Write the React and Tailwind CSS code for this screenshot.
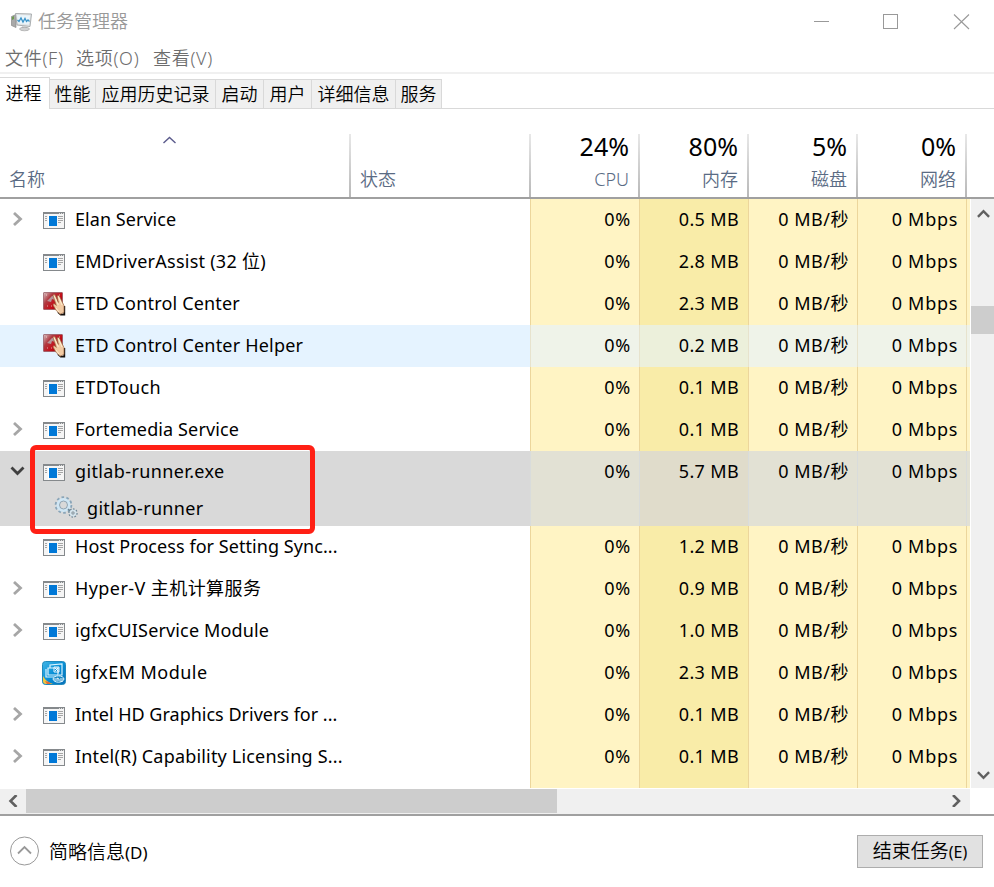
import React, { useState } from "react";

const uiFont = "font-['Noto_Sans','Noto_Sans_CJK_SC',sans-serif]";

const menus = [
  { name: "文件(F)", width: "w-[57px]" },
  { name: "选项(O)", width: "w-[63px]" },
  { name: "查看(V)", width: "w-[60px]" },
];

const tabs = [
  { name: "性能", width: "w-[46px]" },
  { name: "应用历史记录", width: "w-[120px]" },
  { name: "启动", width: "w-[48px]" },
  { name: "用户", width: "w-[48px]" },
  { name: "详细信息", width: "w-[84px]" },
  { name: "服务", width: "w-[46px]" },
];

const columns = [
  { usage: "24%", name: "CPU" },
  { usage: "80%", name: "内存" },
  { usage: "5%", name: "磁盘" },
  { usage: "0%", name: "网络" },
];

const processes = [
  { name: "Elan Service", icon: "app", arrow: true, memory: "0.5 MB", tracking: "tracking-[0.05px]" },
  { name: "EMDriverAssist (32 位)", icon: "app", memory: "2.8 MB", tracking: "tracking-[0.25px]" },
  { name: "ETD Control Center", icon: "etd", memory: "2.3 MB", tracking: "tracking-[0.18px]" },
  { name: "ETD Control Center Helper", icon: "etd", memory: "0.2 MB", hover: true, tracking: "tracking-[0.2px]" },
  { name: "ETDTouch", icon: "app", memory: "0.1 MB", tracking: "tracking-[0.35px]" },
  { name: "Fortemedia Service", icon: "app", arrow: true, memory: "0.1 MB", tracking: "tracking-[0.12px]" },
  { name: "gitlab-runner.exe", icon: "app", child: "gitlab-runner", memory: "5.7 MB", tracking: "tracking-[0.37px]" },
  { name: "Host Process for Setting Sync...", icon: "app", memory: "1.2 MB", tracking: "tracking-[0.06px]" },
  { name: "Hyper-V 主机计算服务", icon: "app", arrow: true, memory: "0.9 MB", tracking: "tracking-[0.42px]" },
  { name: "igfxCUIService Module", icon: "app", arrow: true, memory: "1.0 MB", tracking: "tracking-[0.15px]" },
  { name: "igfxEM Module", icon: "intel", memory: "2.3 MB", tracking: "tracking-[0.45px]" },
  { name: "Intel HD Graphics Drivers for ...", icon: "app", arrow: true, memory: "0.1 MB", tracking: "tracking-normal" },
  { name: "Intel(R) Capability Licensing S...", icon: "app", arrow: true, memory: "0.1 MB", tracking: "tracking-[0.18px]" },
];

const Chevron = ({ className, points = "1,8 7,2 13,8", stroke = "#606060", width = 2.6, box = "0 0 14 10" }) => (
  <svg className={className} viewBox={box} fill="none">
    <polyline points={points} stroke={stroke} strokeWidth={width} />
  </svg>
);

const MonitorIcon = () => (
  <svg className="w-[22px] h-5" viewBox="0 0 22 20">
    <path d="M.5 4.5L5 2.5v13l-4.5-2z" fill="#a9a9a9" stroke="#8a8a8a" strokeWidth=".7" />
    <path d="M1 5l2-1v3L1 8z" fill="#6f9c50" />
    <path d="M4.5 1.5l16 .5-1.5 12.5L6 13z" fill="#e2e5e6" stroke="#a2a6a8" strokeWidth=".9" />
    <path d="M6 3l13 .5-1.2 9L7 11.5z" fill="#eaf5fb" />
    <path d="M6.5 8l1.5 1.5L10 6l2 4 2-3.5 1.5 3L17 8l1.5 1.5" fill="none" stroke="#3a93c8" strokeWidth="1.3" />
    <path d="M11 14.5l5 .5v2h-5z" fill="#b5b5b5" />
    <ellipse cx="13.5" cy="17" rx="5" ry="1.8" fill="#cfd0d1" stroke="#a0a0a0" strokeWidth=".6" />
  </svg>
);

const AppIcon = () => (
  <svg className="w-[22px] h-[17px]" viewBox="0 0 22 17" shapeRendering="crispEdges">
    <rect width="22" height="17" fill="#85898c" />
    <rect x="1" y="2" width="20" height="14" fill="#f5f5f5" />
    <rect x="5" y="2" width="1" height="14" fill="#fff" />
    <rect x="6" y="4" width="8" height="10" fill="#0078d7" />
    <path d="M2 4.5h2M2 6.5h2M2 8.5h2M15 4.5h5M15 6.5h5M15 8.5h5M15 10.5h3" stroke="#a5a5a5" />
    <path d="M16 1.5h1M18 1.5h1M20 1.5h1" stroke="#ddd" />
  </svg>
);

const EtdIcon = () => (
  <svg className="w-[23px] h-6" viewBox="0 0 23 24">
    <defs>
      <linearGradient id="etdRed" x1="0" y1="0" x2="1" y2=".7">
        <stop offset="0" stopColor="#d8c4c4" />
        <stop offset=".35" stopColor="#b03a42" />
        <stop offset=".7" stopColor="#c50d17" />
        <stop offset="1" stopColor="#8c0710" />
      </linearGradient>
    </defs>
    <rect x=".5" y=".5" width="19" height="17" rx=".5" fill="url(#etdRed)" stroke="#91505a" strokeWidth=".7" />
    <path d="M4 9l5-5h2l1 4-3-1-1 3z" fill="#b7a7aa" opacity=".85" />
    <path d="M21.3 14v8.7h-3.5L15 20" fill="none" stroke="#15100d" strokeWidth="1.8" />
    <path d="M10 3.5c.5-1.5 2-1 2.3 0l3 7-1-6c0-1.5 1.8-1.5 2.2 0l4.5 9v7l-4 1.7-4-4-2.7-4.8c-.5-1.6.7-2.2 2-1l1 1z" fill="#f2cba4" stroke="#9a6644" strokeWidth=".7" />
    <path d="M11.3 4l4 9M15.4 4.5l3.6 8.5M13 16l3 4" stroke="#fff0d5" strokeWidth=".9" />
    <path d="M3 3h1M16 3h1M4 14h1M8 14h1" stroke="#fff" opacity=".6" />
  </svg>
);

const IntelIcon = () => (
  <svg className="-ml-px w-6 h-6" viewBox="0 0 24 24">
    <defs>
      <linearGradient id="intelBlue" x1="0" y1="0" x2="1" y2="1">
        <stop stopColor="#42b5e5" />
        <stop offset=".5" stopColor="#078fd6" />
        <stop offset="1" stopColor="#086eb8" />
      </linearGradient>
    </defs>
    <rect x=".5" y=".5" width="23" height="23" rx="3" fill="url(#intelBlue)" stroke="#218abc" />
    <path d="M1 15q3 6 10 8H4q-3 0-3-3z" fill="#f4c83d" />
    <path d="M3 20l4 1 2 2H5z" fill="#e66735" />
    <path d="M8 7V4l12-1v11h-3M6 7h10v7H6zM4 8v8h9" fill="none" stroke="#d9f4ff" strokeWidth="1.2" />
    <path d="M12 6h5v5h-5zM13 7l3 3M16 7l-3 3" fill="none" stroke="#fff" strokeWidth=".9" />
    <ellipse cx="16.5" cy="18" rx="5.4" ry="3.2" fill="#1687c3" stroke="#e2f7ff" strokeWidth="1" />
    <path d="M13 17v3M15 20v-3l2 1v2M18 18h3M18 20h3" fill="none" stroke="#fff" strokeWidth=".9" />
  </svg>
);

const GearIcon = () => (
  <svg className="w-6 h-[23px]" viewBox="0 0 24 23" fill="none">
    <circle cx="9.5" cy="9" r="7.6" stroke="#8aa5b8" strokeWidth="2.4" strokeDasharray="2.6 2.2" />
    <circle cx="9.5" cy="9" r="5.6" fill="#dfe6ea" stroke="#cfe6f4" strokeWidth="3" />
    <circle cx="9.5" cy="9" r="4" fill="#d9d9d9" stroke="#7d97a9" strokeWidth=".8" />
    <path d="M14 13l3 3" stroke="#6d8594" strokeWidth="1.4" />
    <circle cx="19" cy="17" r="3.8" stroke="#6d8594" strokeWidth="1.8" strokeDasharray="1.6 1.3" />
    <circle cx="19" cy="17" r="2.6" stroke="#d3e3ec" strokeWidth="1.8" />
    <circle cx="19" cy="17" r="1.2" stroke="#6d8594" strokeWidth=".8" />
  </svg>
);

const icons = { app: AppIcon, etd: EtdIcon, intel: IntelIcon };

const Label = ({ children, className = "" }) => (
  <span className={`whitespace-nowrap ${className}`}>{children}</span>
);

const ProcessRow = ({ process, expanded, onToggle }) => {
  const Icon = icons[process.icon];
  const values = [
    { text: "0%", tracking: "tracking-[0.8px] -mr-px" },
    { text: process.memory, tracking: "tracking-[0.35px]" },
    { text: "0 MB/秒", tracking: "tracking-[0.5px] -mr-px" },
    { text: "0 Mbps", tracking: "tracking-[0.7px] -mr-px" },
  ];
  const selected = !!process.child;

  let rowBg = "bg-white";
  let cellBg = "bg-[#fff4c4] border-[#ecd69c]";
  let memoryBg = "bg-[#f9eca8] border-[#ecd69c]";
  if (process.hover) {
    rowBg = "bg-[#e5f3ff]";
    cellBg = "bg-[#eff3e9] border-[#e7e3cd]";
    memoryBg = "bg-[#ecf0db] border-[#e7e3cd]";
  }
  if (selected) {
    rowBg = "bg-[#d9d9d9]";
    cellBg = "bg-[#e2e1d4] border-[#d9dcdb]";
    memoryBg = "bg-[#e0dccb] border-[#d9dcdb]";
  }

  return (
    <div className={`flex w-[970px] shrink-0 ${selected && expanded ? "h-[75px]" : "h-[42px]"} ${rowBg}`}>
      <div className="w-[530px] shrink-0">
        <div className="flex h-[42px] items-center">
          <div className="flex w-[43px] shrink-0 items-center pb-0.5 pl-3">
            {process.arrow && (
              <Chevron className="w-[11px] h-[14px]" box="0 0 11 14" points="2,1 8.5,7 2,13" stroke="#a6a6a6" width={2.8} />
            )}
            {selected && (
              <button onClick={onToggle} className="-ml-0.5">
                <Chevron className="block w-[15px] h-[10px]" box="0 0 15 10" points="1.5,1.5 7.5,7.5 13.5,1.5" stroke="#404040" width={2.8} />
              </button>
            )}
          </div>
          <div className="flex w-8 shrink-0 items-center">
            <Icon />
          </div>
          <Label className={`pb-0.5 ${process.tracking}`}>{process.name}</Label>
        </div>
        {selected && expanded && (
          <div className="flex h-[33px] items-center pl-[54px]">
            <div className="w-[33px] -mt-1">
              <GearIcon />
            </div>
            <Label className="-mt-0.5 tracking-[0.33px]">{process.child}</Label>
          </div>
        )}
      </div>
      {values.map((value, idx) => (
        <div
          key={idx}
          className={`flex w-[109px] shrink-0 justify-end border-l pr-[9px] pt-[7px] ${idx === 1 ? memoryBg : cellBg}`}
        >
          <Label className={`h-[27px] leading-[27px] ${value.tracking}`}>{value.text}</Label>
        </div>
      ))}
      <div className={`w-1 border-l ${cellBg}`}></div>
    </div>
  );
};

export default function App() {
  const [expanded, setExpanded] = useState(true);

  return (
    <div className={`relative flex h-[887px] w-[994px] flex-col overflow-hidden bg-white text-lg leading-[27px] text-black ${uiFont}`}>
      {/* Title bar */}
      <div className="flex h-[43px] shrink-0 items-center justify-between pl-[11px] text-[#999999]">
        <div className="flex items-center gap-[5px]">
          <MonitorIcon />
          <Label className="font-[350] text-[#999]">任务管理器</Label>
        </div>
        <svg className="w-[180px] h-[43px]" viewBox="0 0 180 43" fill="none" stroke="#999">
          <path d="M0 21.5h15M69.5 14.5h14v14h-14z" shapeRendering="crispEdges" />
          <path d="M140 14.5l15 14.5M155 14.5l-15 14.5" strokeWidth="1.1" />
        </svg>
      </div>

      {/* Menu */}
      <div className="flex h-[31px] shrink-0 gap-3.5 border-b-2 border-[#f0f0f0] pl-[5px] pt-0.5 font-[350] tracking-[0.7px] text-[#6d6d6d]">
        {menus.map((menu) => (
          <Label key={menu.name} className={menu.width}>{menu.name}</Label>
        ))}
      </div>

      {/* Tabs */}
      <div className="flex h-[35px] shrink-0 items-end pt-[3px] font-[350]">
        <button className="h-8 w-[50px] border-t border-r border-[#d9d9d9] bg-white pr-0.5 text-center">进程</button>
        {tabs.map((tab) => (
          <button
            key={tab.name}
            className={`h-[30px] shrink-0 whitespace-nowrap border-y border-r border-[#d9d9d9] bg-[#f0f0f0] text-center leading-7 ${tab.width}`}
          >
            {tab.name}
          </button>
        ))}
        <div className="grow border-b border-[#d9d9d9]"></div>
      </div>

      {/* Column headers */}
      <div className="flex h-[90px] shrink-0 items-end border-b-2 border-[#a0a0a0] text-[#5a6b84]">
        <div className="flex h-[63px] w-[351px] shrink-0">
          <div className="grow pt-0.5 pl-[9px] font-[350]">
            <Chevron className="ml-[153px] h-[9px] w-[15px]" box="0 0 15 9" points="1.5,7 7.5,1.5 13.5,7" stroke="#5b5b8c" width={1.4} />
            <div className="pt-[21px]">名称</div>
          </div>
          <div className="w-0.5 bg-linear-to-b from-[#e8e8e8] to-[#b8b8b8]"></div>
        </div>
        <div className="flex h-[63px] w-[180px] shrink-0">
          <div className="grow pt-8 pl-[9px] font-[350]">状态</div>
          <div className="w-0.5 bg-linear-to-b from-[#e8e8e8] to-[#b8b8b8]"></div>
        </div>
        {columns.map((col) => (
          <div key={col.name} className="flex h-[63px] w-[109px] shrink-0">
            <div className="grow pr-[9px] text-right">
              <div className="h-8 text-[25px] leading-[25px] text-black">{col.usage}</div>
              <div className="font-[350]">{col.name}</div>
            </div>
            <div className="w-0.5 bg-linear-to-b from-[#e8e8e8] to-[#b8b8b8]"></div>
          </div>
        ))}
      </div>

      {/* Process list */}
      <div className="flex h-[589px] shrink-0">
        <div className="flex w-[971px] shrink-0 flex-col overflow-hidden">
          {processes.map((process) => (
            <ProcessRow key={process.name} process={process} expanded={expanded} onToggle={() => setExpanded(!expanded)} />
          ))}
          <div className="flex grow pl-[530px]">
            {columns.map((col, idx) => (
              <div key={idx} className={`w-[109px] border-l border-[#ecd69c] ${idx === 1 ? "bg-[#f9eca8]" : "bg-[#fff4c4]"}`}></div>
            ))}
            <div className="w-1 border-l border-[#ecd69c] bg-[#fff4c4]"></div>
          </div>
        </div>
        <div className="flex w-[23px] flex-col items-center bg-[#f0f0f0] pt-2.5 pb-2 pl-px">
          <Chevron className="h-[10px] w-[13px]" />
          <div className="-ml-px mt-[87px] h-7 w-[23px] bg-[#cdcdcd]"></div>
          <Chevron className="mt-auto h-[10px] w-[13px] rotate-180" />
        </div>
      </div>

      {/* Horizontal scrollbar */}
      <div className="h-7 shrink-0 border-b-2 border-[#a0a0a0] pt-px">
        <div className="flex h-[25px] w-[970px] items-center bg-[#f0f0f0] pb-px">
          <Chevron className="h-3 w-[26px]" box="0 0 26 12" points="16.5,0 10.5,6 16.5,12" />
          <div className="h-6 w-[531px] bg-[#cdcdcd]"></div>
          <Chevron className="ml-auto h-3 w-[26px]" box="0 0 26 12" points="9,0 15,6 9,12" />
        </div>
      </div>

      {/* Footer */}
      <div className="flex grow items-center justify-between pr-[11px] pb-px pl-[9px] font-[350]">
        <button className="flex items-center gap-2.5">
          <svg className="h-[30px] w-[30px]" viewBox="0 0 30 30" fill="none" stroke="#999">
            <circle cx="15.5" cy="15" r="14" />
            <polyline points="9,17.5 15.5,11 22,17.5" strokeWidth="1.8" />
          </svg>
          <span className="pt-0.5 text-[19px]">简略信息<span className="text-[17px] font-normal">(D)</span></span>
        </button>
        <button className="h-[33px] w-[126px] border border-[#adadad] bg-[#e1e1e1] text-[19px]">
          结束任务<span className="text-base font-normal">(E)</span>
        </button>
      </div>

      {/* Highlight box */}
      <div className="absolute top-[445px] left-[30px] h-[89px] w-[285px] rounded-md border-[5px] border-[#ff2015]"></div>
    </div>
  );
}
